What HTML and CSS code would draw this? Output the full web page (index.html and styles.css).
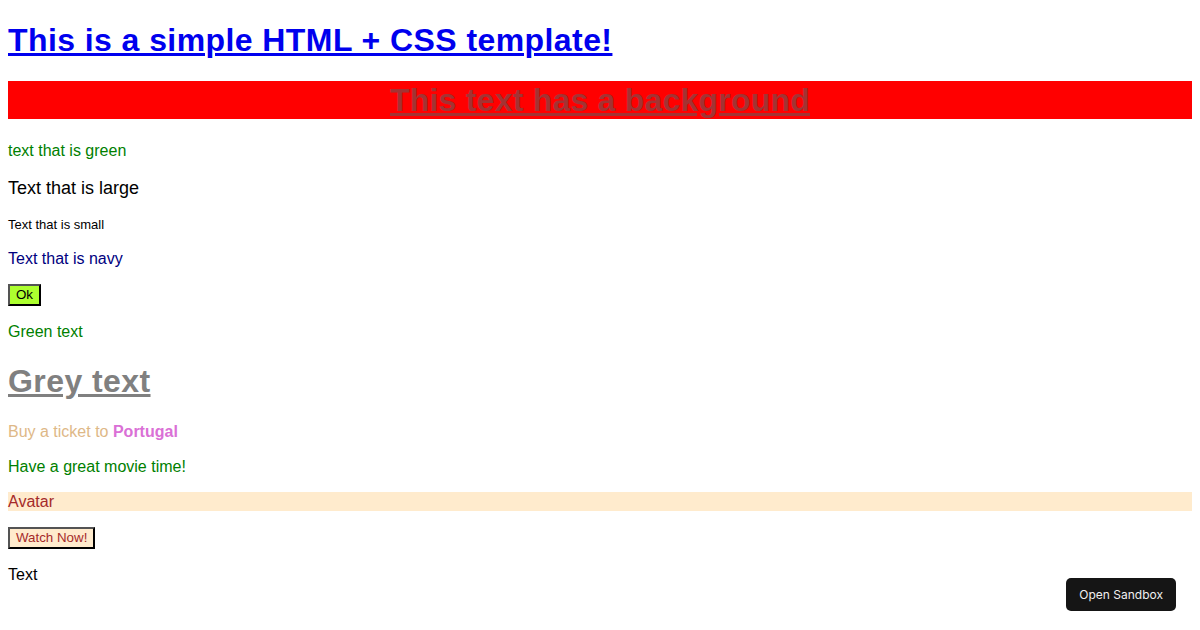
FILE: index.html
```html
<!DOCTYPE html>
<html>
<head>
<meta charset="utf-8">
<title>Template</title>
<link rel="stylesheet" href="styles.css">
</head>
<body>
<h1 class="title"><a href="#" class="title-link">This is a simple HTML + CSS template!</a></h1>
<h1 class="banner">This text has a background</h1>
<p class="green">text that is green</p>
<p class="large">Text that is large</p>
<p class="small">Text that is small</p>
<p class="navy">Text that is navy</p>
<button class="ok-btn">Ok</button>
<p class="green">Green text</p>
<h1 class="grey">Grey text</h1>
<p class="ticket">Buy a ticket to <strong class="country">Portugal</strong></p>
<p class="green">Have a great movie time!</p>
<p class="avatar">Avatar</p>
<button class="watch-btn">Watch Now!</button>
<p class="plain">Text</p>
<a href="#" class="sandbox">Open Sandbox</a>
</body>
</html>
```

FILE: styles.css
```css
html {
  margin: 0;
  padding: 0;
}
body {
  margin: 0;
  padding: 0 8px 8px;
  font-family: "Liberation Sans", Arial, sans-serif;
  line-height: 1.1925;
  color: #000;
  background: #fff;
}
h1 {
  font-size: 32px;
  margin: 21.44px 0;
}
p {
  margin: 1em 0;
}
.title {
  letter-spacing: 0.42px;
}
.title-link {
  color: #0000ee;
}
.banner {
  background-color: #ff0000;
  color: #a33333;
  text-align: center;
  text-decoration: underline;
  letter-spacing: 0.22px;
}
.green {
  color: green;
}
.large {
  font-size: 18px;
}
.small {
  font-size: 13px;
}
.navy {
  color: navy;
}
.ok-btn,
.watch-btn {
  font-family: "Liberation Sans", Arial, sans-serif;
  font-size: 13.333px;
  line-height: 16px;
  margin: 0;
}
.ok-btn {
  background-color: #adff2f;
}
.grey {
  color: grey;
  text-decoration: underline;
  letter-spacing: 0.42px;
}
.ticket {
  color: burlywood;
}
.country {
  color: orchid;
}
.avatar {
  background-color: blanchedalmond;
  color: brown;
}
.watch-btn {
  background-color: blanchedalmond;
  color: brown;
}
.sandbox {
  position: fixed;
  right: 24px;
  bottom: 19px;
  background: #151515;
  color: #f0f0f0;
  font-family: Inter, "Liberation Sans", sans-serif;
  font-size: 12px;
  text-decoration: none;
  padding: 9px 13px;
  border-radius: 5px;
  line-height: 15px;
}
```
